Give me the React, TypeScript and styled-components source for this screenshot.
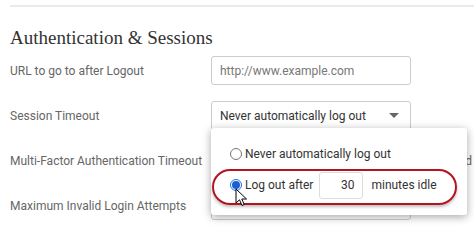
import { FC } from 'react'
import { createGlobalStyle, styled } from 'styled-components'

const GlobalStyle = createGlobalStyle`
  html, body {
    margin: 0;
    padding: 0;
    background: #ffffff;
    overflow: hidden;
  }
  body {
    width: 474px;
    height: 230px;
    font-family: Roboto, 'Liberation Sans', sans-serif;
  }
`

const Page = styled.div`
  position: relative;
  width: 474px;
  height: 230px;
  padding: 5px 0 0 10px;
  box-sizing: border-box;
  overflow: hidden;
`

const Rule = styled.div`
  height: 2px;
  background: #ebebeb;
`

const Heading = styled.h2`
  margin: 19px 0 0;
  font-family: 'Liberation Serif', serif;
  font-weight: normal;
  font-size: 19px;
  line-height: 24px;
  color: #333333;
`

const Form = styled.div`
  display: grid;
  grid-template-columns: 201px 1fr;
  row-gap: 16px;
  margin-top: 6px;
  align-items: center;
`

const Label = styled.div`
  font-size: 12px;
  color: #666666;
  white-space: nowrap;
`

const Field = styled.div`
  position: relative;
  display: flex;
  align-items: center;
  width: 200px;
  height: 29px;
  box-sizing: border-box;
  border: 1px solid #cccccc;
  border-radius: 3px;
  padding: 0 8px;
  font-size: 12px;
  color: #333333;
  background: #ffffff;
`

const Placeholder = styled.span`
  color: #777777;
`

const Caret = styled.span`
  margin-left: auto;
  margin-right: 3px;
  width: 0;
  height: 0;
  border-left: 5px solid transparent;
  border-right: 5px solid transparent;
  border-top: 5px solid #666666;
`

const Trailing = styled.span`
  position: absolute;
  right: -62px;
  font-size: 12px;
  color: #666666;
  white-space: nowrap;
`

const Popup = styled.div`
  position: absolute;
  left: 211px;
  top: 128px;
  width: 256px;
  height: 87px;
  box-sizing: border-box;
  padding: 14px 0 0 19px;
  background: #ffffff;
  border-radius: 3px;
  box-shadow: 0 2px 8px rgba(0, 0, 0, 0.35);
  display: flex;
  flex-direction: column;
  gap: 7px;
`

const Option = styled.div`
  display: flex;
  align-items: center;
  height: 24px;
  font-size: 12px;
  color: #333333;
  white-space: nowrap;
`

const Radio = styled.span<{ $checked?: boolean }>`
  width: 12px;
  height: 12px;
  box-sizing: border-box;
  border-radius: 50%;
  border: 1px solid ${({ $checked }) => ($checked ? '#1a73e8' : '#777777')};
  margin-right: 3px;
  display: flex;
  align-items: center;
  justify-content: center;
  background: #ffffff;
  &::after {
    content: '';
    width: 8px;
    height: 8px;
    border-radius: 50%;
    background: ${({ $checked }) => ($checked ? '#1a5fd0' : 'transparent')};
  }
`

const Minutes = styled.span`
  display: flex;
  align-items: center;
  justify-content: flex-end;
  width: 44px;
  height: 27px;
  box-sizing: border-box;
  margin: 0 8px 0 6px;
  padding-right: 8px;
  border: 1px solid #dddddd;
  border-radius: 3px;
  font-size: 12px;
  color: #333333;
`

const Highlight = styled.div`
  position: absolute;
  left: 1px;
  top: 41px;
  width: 245px;
  height: 36px;
  box-sizing: border-box;
  border: 2px solid #b3141f;
  border-radius: 18px;
  box-shadow: 0 2px 3px rgba(0, 0, 0, 0.25);
  pointer-events: none;
`

const Cursor = styled.svg`
  position: absolute;
  left: 24px;
  top: 60px;
`

const App: FC = () => (
  <>
    <GlobalStyle />
    <Page>
      <Rule />
      <Heading>Authentication &amp; Sessions</Heading>
      <Form>
        <Label>URL to go to after Logout</Label>
        <Field>
          <Placeholder>http://www.example.com</Placeholder>
        </Field>
        <Label>Session Timeout</Label>
        <Field>
          Never automatically log out
          <Caret />
        </Field>
        <Label>Multi-Factor Authentication Timeout</Label>
        <Field>
          <Trailing>Not used</Trailing>
        </Field>
        <Label>Maximum Invalid Login Attempts</Label>
        <Field />
      </Form>
      <Popup>
        <Option>
          <Radio />
          Never automatically log out
        </Option>
        <Option>
          <Radio $checked />
          Log out after
          <Minutes>30</Minutes>
          minutes idle
        </Option>
        <Highlight />
        <Cursor width="13" height="19" viewBox="0 0 13 19">
          <path
            d="M1 1 L1 15 L4.5 11.8 L7 17.5 L9.2 16.5 L6.8 11 L11.5 11 Z"
            fill="#ffffff"
            stroke="#000000"
            strokeWidth="1"
            strokeLinejoin="round"
          />
        </Cursor>
      </Popup>
    </Page>
  </>
)

export default App
